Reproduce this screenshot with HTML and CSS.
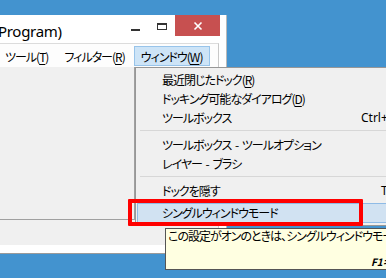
FILE: index.html
```html
<!DOCTYPE html>
<html lang="ja">
  <head>
    <meta charset="UTF-8" />
    <title>ウィンドウ</title>
    <link rel="stylesheet" href="styles.css">
  </head>
  <body>
    <div class="window">
      <div class="titlebar">
        <span class="title">Program)</span>
        <span class="btn min"><i></i></span>
        <span class="btn max"><i></i></span>
        <span class="btn close">
          <svg width="10" height="10" viewBox="0 0 10 10">
            <path d="M1.5 1.5L8.5 8.5M8.5 1.5L1.5 8.5" stroke="#fff" stroke-width="1.6" />
          </svg>
        </span>
      </div>
      <div class="client">
        <div class="menubar">
          <span class="mitem first">ツール(<u>T</u>)</span>
          <span class="mitem">フィルター(<u>R</u>)</span>
          <span class="mitem open">ウィンドウ(<u>W</u>)</span>
        </div>
        <div class="workspace">
          <div class="panel"></div>
        </div>
      </div>
    </div>

    <div class="menu">
      <div class="mi"><span>最近閉じたドック(<u>R</u>)</span></div>
      <div class="mi"><span>ドッキング可能なダイアログ(<u>D</u>)</span></div>
      <div class="mi"><span>ツールボックス</span><span class="key">Ctrl+B</span></div>
      <div class="sep"></div>
      <div class="mi"><span>ツールボックス - ツールオプション</span></div>
      <div class="mi"><span>レイヤー - ブラシ</span></div>
      <div class="sep"></div>
      <div class="mi"><span>ドックを隠す</span><span class="key tab">Tab</span></div>
      <div class="mi hot"><span>シングルウィンドウモード</span></div>
    </div>

    <div class="mark"></div>

    <div class="tip">
      <p>この設定がオンのときは、シングルウィンドウモードで表示します。</p>
      <p class="help">F1キーでヘルプ</p>
    </div>
  </body>
</html>
```

FILE: styles.css
```css
* {
  margin: 0;
  padding: 0;
  box-sizing: border-box;
}
body {
  position: relative;
  width: 386px;
  height: 278px;
  overflow: hidden;
  background: #4393cf;
  font-family: "Noto Sans CJK JP", sans-serif;
  font-size: 12px;
  font-feature-settings: "palt";
  letter-spacing: -1px;
  word-spacing: 2px;
  color: #000;
}
u {
  text-decoration: underline;
  text-underline-offset: 2px;
}

/* window */
.window {
  display: flex;
  flex-direction: column;
  width: 227px;
  height: 239px;
  margin-top: 15px;
  background: #fff;
  border-right: 1px solid #b9b9b9;
  border-bottom: 1px solid #9a9a9a;
  overflow: hidden;
}
.titlebar {
  display: flex;
  height: 28px;
  padding-right: 6px;
}
.title {
  flex: 1;
  margin-left: -2px;
  padding-top: 6px;
  font-family: "Noto Sans", sans-serif;
  font-size: 15px;
  line-height: 20px;
  letter-spacing: -0.3px;
  white-space: nowrap;
}
.btn {
  display: flex;
  align-items: center;
  justify-content: center;
  height: 21px;
}
.min {
  width: 28px;
  align-items: flex-start;
}
.min i {
  display: block;
  width: 9px;
  height: 2px;
  margin-top: 14px;
  background: #333;
}
.max {
  width: 26px;
  align-items: flex-start;
}
.max i {
  display: block;
  width: 10px;
  height: 7px;
  margin-top: 8px;
  border: 1px solid #333;
  border-top-width: 2px;
}
.close {
  width: 45px;
  background: #c75050;
}

.client {
  flex: 1;
  display: flex;
  flex-direction: column;
  margin: 0 7px 7px 0;
  border-top: 1px solid #dcdcdc;
  border-right: 1px solid #c8c8c8;
  border-bottom: 1px solid #fff;
}
.menubar {
  display: flex;
  gap: 1px;
  height: 23px;
  padding-top: 2px;
  background: #fdfdfd;
  white-space: nowrap;
}
.mitem {
  height: 20px;
  padding: 0 7px 0 6px;
  line-height: 19px;
  border: 1px solid transparent;
}
.mitem.first {
  margin-left: -2px;
}
.mitem.open {
  background: #cde4f7;
  border-color: #98c4ea;
}
.workspace {
  flex: 1;
  background: #f0f0f0;
}
.panel {
  width: 135px;
  height: 153px;
  border-right: 1px solid #a0a0a0;
  border-bottom: 1px solid #a0a0a0;
}

/* dropdown */
.menu {
  position: absolute;
  left: 135px;
  top: 67px;
  width: 270px;
  padding: 2px 1px;
  background: #f0f0f0;
  border: 1px solid #979797;
  white-space: nowrap;
}
.mi {
  display: grid;
  grid-template-columns: 199px auto;
  height: 19px;
  padding-left: 25px;
  line-height: 19px;
}
.key {
  font-family: "Noto Sans", sans-serif;
  letter-spacing: 0;
}
.key.tab {
  padding-left: 20px;
}
.sep {
  height: 8px;
  margin-left: 3px;
  padding-top: 3px;
}
.sep::before {
  content: "";
  display: block;
  height: 1px;
  background: #d7d7d7;
}
.mi.hot {
  height: 20px;
  margin-top: 3px;
  padding-left: 24px;
  line-height: 18px;
  background: #d1e2f2;
  border: 1px solid #8fbbe6;
}

.mark {
  position: absolute;
  left: 128px;
  top: 199px;
  width: 235px;
  height: 27px;
  border: 4px solid #ff0000;
  border-radius: 1px;
}

.tip {
  position: absolute;
  left: 165px;
  top: 228px;
  width: 250px;
  height: 42px;
  padding-left: 2px;
  background: #ffffe1;
  border: 1px solid #555;
  white-space: nowrap;
}
.tip p {
  line-height: 14px;
}
.help {
  margin-top: 12px;
  padding-left: 203px;
  font-size: 10px;
  font-style: italic;
  font-weight: bold;
  letter-spacing: 0;
}
```
